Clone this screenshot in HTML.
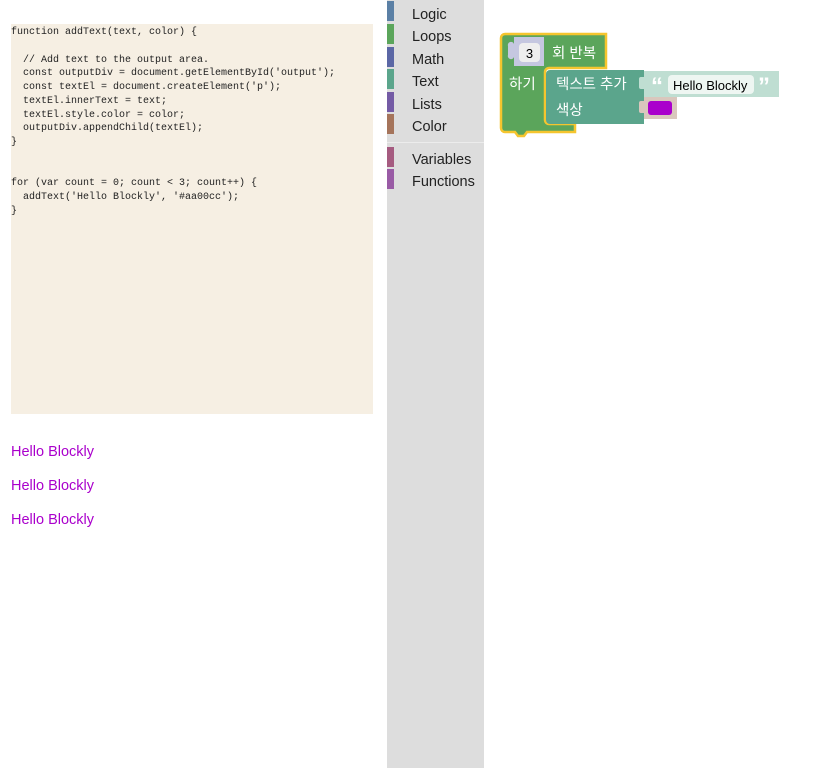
<!DOCTYPE html>
<html><head><meta charset="utf-8"><style>
body{margin:0;width:821px;height:768px;background:#fff;position:relative;overflow:hidden;font-family:"Liberation Sans","Noto Sans CJK KR",sans-serif}
#code{position:absolute;left:11px;top:24px;width:362px;height:390px;background:#f6efe3;}
#code pre{margin:0;position:absolute;left:0;top:2px;font-family:"Liberation Mono","Noto Sans CJK KR",monospace;font-size:10px;line-height:13.75px;color:#222;}
.out{position:absolute;left:11px;color:#aa00cc;font-size:14.5px}
#tb{position:absolute;left:387px;top:0;width:97px;height:768px;background:#dddddd}
.it{position:absolute;left:0;height:20px;width:97px}
.it b{position:absolute;left:0;top:0;width:7px;height:20px}
.it span{position:absolute;left:25px;top:1px;font-size:14.5px;color:#222}
</style></head><body>
<div id="code"><pre>function addText(text, color) {

  // Add text to the output area.
  const outputDiv = document.getElementById('output');
  const textEl = document.createElement('p');
  textEl.innerText = text;
  textEl.style.color = color;
  outputDiv.appendChild(textEl);
}


for (var count = 0; count &lt; 3; count++) {
  addText('Hello Blockly', '#aa00cc');
}</pre></div>
<div class="out" style="top:444px">Hello Blockly</div>
<div class="out" style="top:478px">Hello Blockly</div>
<div class="out" style="top:512px">Hello Blockly</div>
<div id="tb">
<div class="it" style="top:1px"><b style="background:#5b80a5"></b><span style="top:6px">Logic</span></div>
<div class="it" style="top:24px"><b style="background:#5ba55b"></b><span style="top:5px">Loops</span></div>
<div class="it" style="top:47px"><b style="background:#5b67a5"></b><span style="top:5px">Math</span></div>
<div class="it" style="top:69px"><b style="background:#5ba58c"></b><span style="top:5px">Text</span></div>
<div class="it" style="top:92px"><b style="background:#745ba5"></b><span style="top:5px">Lists</span></div>
<div class="it" style="top:114px"><b style="background:#a5745b"></b><span style="top:5px">Color</span></div>
<div style="position:absolute;left:0;top:142px;width:97px;height:1px;background:#ececec"></div>
<div class="it" style="top:147px"><b style="background:#a55b80"></b><span style="top:5px">Variables</span></div>
<div class="it" style="top:169px"><b style="background:#995ba5"></b><span style="top:5px">Functions</span></div>
</div>
<svg style="position:absolute;left:0;top:0" width="821" height="768" font-family="Liberation Sans, Noto Sans CJK KR, sans-serif">
<path d="M505,34 H606 V68 H549 a4 4 0 0 0 -4 4 V120 a4 4 0 0 0 4 4 H575 V132 H527 l-3 4 h-6 l-3-4 H505 a4 4 0 0 1 -4-4 V38 a4 4 0 0 1 4-4z" fill="#5ba55b" stroke="#f5c52e" stroke-width="2.5"/>
<path d="M514,37 H544 V66 H514 V57 a3 3 0 0 1 -6 -2 V46 a3 3 0 0 1 6 -2z" fill="#c5c7e0"/>
<rect x="519" y="43" width="21" height="19" rx="4" fill="#eeeeee"/>
<text x="529.5" y="58" font-size="13" text-anchor="middle" fill="#000">3</text>
<text x="552" y="58" font-size="14.5" fill="#fff">회 반복</text>
<text x="509" y="89" font-size="14.5" fill="#fff">하기</text>
<path d="M644,71 H779 V97 H644z" fill="#bfded2"/>
<path d="M644,97 H677 V119 H644z" fill="#d9c7bd"/>
<path d="M550,70 H644 V124 H550 a4 4 0 0 1 -4-4 V74 a4 4 0 0 1 4-4z" fill="#5ba58c"/>
<path d="M644,77 h-3 a2 2 0 0 0 -2 2 v8 a2 2 0 0 0 2 2 h3z" fill="#bfded2"/>
<path d="M644,101 h-3 a2 2 0 0 0 -2 2 v8 a2 2 0 0 0 2 2 h3z" fill="#d9c7bd"/>
<text x="556" y="89" font-size="14.5" fill="#fff">텍스트 추가</text>
<text x="556" y="115" font-size="14.5" fill="#fff">색상</text>
<text x="651" y="94" font-size="24" font-weight="bold" fill="#fff">“</text>
<rect x="668" y="75" width="86" height="19" rx="4" fill="#eef6f2"/>
<text x="673" y="90" font-size="13" fill="#000">Hello Blockly</text>
<text x="758" y="94" font-size="24" font-weight="bold" fill="#fff">”</text>
<rect x="648" y="101" width="24" height="14" rx="3" fill="#aa00cc"/>
</svg>
</body></html>
